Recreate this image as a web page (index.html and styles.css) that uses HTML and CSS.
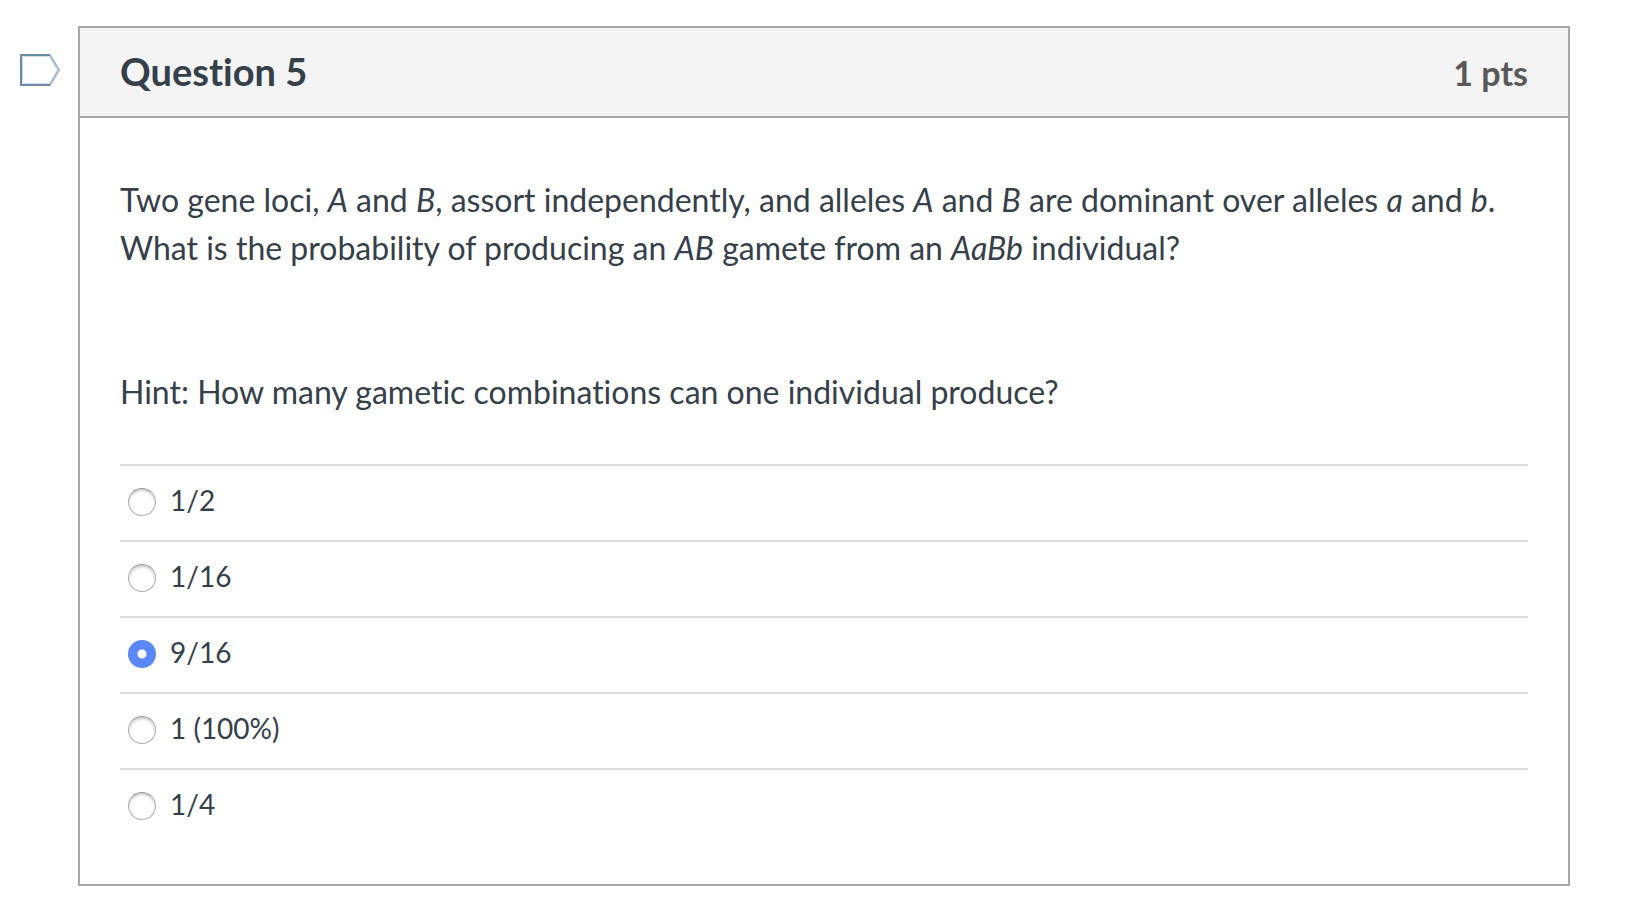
FILE: index.html
```html
<!DOCTYPE html>
<html lang="en">
<head>
    <meta charset="UTF-8">
    <meta name="viewport" content="width=device-width, initial-scale=1.0">
    <title>Question 5</title>
    <link rel="stylesheet" href="styles.css">
</head>
<body>
    <main class="question-row">
        <button class="flag" type="button" aria-label="Flag question">
            <svg width="40" height="32" viewBox="0 0 40 32" fill="none">
                <path d="M2.5 2.5H29.5L37 16L29.5 29.5H2.5Z" stroke="#d3dce4"/>
                <path d="M30 1L39 16L30 31" stroke="#a3b5c5" stroke-width="2"/>
                <path d="M30 1H1V31H30" stroke="#6c89a5" stroke-width="2"/>
            </svg>
        </button>

        <section class="question">
            <header class="question-header">
                <h1 class="question-name">Question 5</h1>
                <span class="question-points">1 pts</span>
            </header>

            <form class="question-body">
                <div class="question-text">
                    <p>Two gene loci, <em>A</em> and <em>B</em>, assort independently, and alleles <em>A</em> and <em>B</em> are dominant over alleles <em>a</em> and <em>b</em>. What is the probability of producing an <em>AB</em> gamete from an <em>AaBb</em> individual?</p>
                    <p class="hint">Hint: How many gametic combinations can one individual produce?</p>
                </div>

                <div class="answers" role="radiogroup" aria-label="Answers">
                    <div class="answer">
                        <input type="radio" name="answer" id="answer-1">
                        <label for="answer-1">1/2</label>
                    </div>
                    <div class="answer">
                        <input type="radio" name="answer" id="answer-2">
                        <label for="answer-2">1/16</label>
                    </div>
                    <div class="answer">
                        <input type="radio" name="answer" id="answer-3" checked>
                        <label for="answer-3">9/16</label>
                    </div>
                    <div class="answer">
                        <input type="radio" name="answer" id="answer-4">
                        <label for="answer-4">1 (100%)</label>
                    </div>
                    <div class="answer">
                        <input type="radio" name="answer" id="answer-5">
                        <label for="answer-5">1/4</label>
                    </div>
                </div>
            </form>
        </section>
    </main>
</body>
</html>
```
FILE: styles.css
```css
* {
    box-sizing: border-box;
    margin: 0;
    padding: 0;
}

body {
    background-color: white;
    color: #35404a;
    font-family: Lato, "Liberation Sans", sans-serif;
    font-size: 32px;
    font-variant-ligatures: none;
    line-height: 48px;
}

.question-row {
    display: flex;
    align-items: flex-start;
    gap: 18px;
    padding: 26px 62px 20px 20px;
}

.flag {
    flex: none;
    margin-top: 28px;
    border: none;
    background: none;
    cursor: pointer;
}

.flag svg {
    display: block;
}

.question {
    flex: 1;
    border: 2px solid #a8a8a8;
}

.question-header {
    display: flex;
    justify-content: space-between;
    align-items: baseline;
    padding: 19px 40px;
    background-color: #f4f4f4;
    border-bottom: 2px solid #a8a8a8;
}

.question-name {
    font-size: 38px;
    font-weight: bold;
}

.question-points {
    color: #595959;
    font-size: 34px;
    font-weight: bold;
}

.question-body {
    padding: 58px 40px 40px;
}

.hint {
    margin-top: 96px;
}

.answers {
    margin-top: 48px;
}

.answer {
    display: flex;
    align-items: flex-start;
    gap: 14px;
    padding: 22px 8px 24px;
    border-top: 2px solid #dcdcdc;
    font-size: 28px;
    line-height: 24px;
}

.answer input {
    appearance: none;
    width: 28px;
    height: 28px;
    border: 1px solid #b0b0b0;
    border-top-color: #999;
    border-radius: 50%;
    background-color: white;
    box-shadow: inset 0 2px 3px rgba(0, 0, 0, 0.2);
}

.answer input:checked {
    border: none;
    background: radial-gradient(circle, white 4px, #5a87f9 5px);
    box-shadow: none;
}
```
